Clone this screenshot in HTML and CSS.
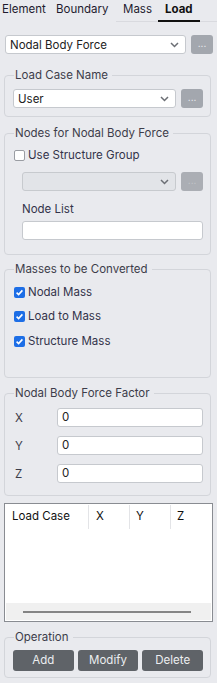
FILE: index.html
```html
<!DOCTYPE html>
<html>
<head>
<meta charset="utf-8">
<link rel="stylesheet" href="styles.css">
</head>
<body>
<div class="tabs">
  <div class="tab t-element">Element</div>
  <div class="tab t-boundary">Boundary</div>
  <div class="tabline">
    <div class="tab t-mass">Mass</div>
    <div class="tab t-load active">Load</div>
  </div>
</div>

<div class="toprow">
  <div class="select w-top"><span class="val">Nodal Body Force</span><svg class="chev" width="9" height="6" viewBox="0 0 9 6"><path d="M1 1 L4.5 4.5 L8 1" fill="none" stroke="#6b6e74" stroke-width="1.5"/></svg></div>
  <div class="dots">...</div>
</div>

<fieldset class="group g1">
  <legend>Load Case Name</legend>
  <div class="row">
    <div class="select w-in"><span class="val">User</span><svg class="chev" width="9" height="6" viewBox="0 0 9 6"><path d="M1 1 L4.5 4.5 L8 1" fill="none" stroke="#6b6e74" stroke-width="1.5"/></svg></div>
    <div class="dots">...</div>
  </div>
</fieldset>

<fieldset class="group g2">
  <legend>Nodes for Nodal Body Force</legend>
  <div class="check"><span class="box"></span>Use Structure Group</div>
  <div class="row indent">
    <div class="select disabled w-dis"><span class="val"></span><svg class="chev" width="9" height="6" viewBox="0 0 9 6"><path d="M1 1 L4.5 4.5 L8 1" fill="none" stroke="#6b6e74" stroke-width="1.5"/></svg></div>
    <div class="dots disabled">...</div>
  </div>
  <div class="label indent">Node List</div>
  <div class="input indent nodelist"></div>
</fieldset>

<fieldset class="group g3">
  <legend>Masses to be Converted</legend>
  <div class="check on"><span class="box"><svg width="11" height="11" viewBox="0 0 11 11"><path d="M2.6 5.6 L4.6 7.5 L8.4 3.4" fill="none" stroke="#fff" stroke-width="1.6"/></svg></span>Nodal Mass</div>
  <div class="check on"><span class="box"><svg width="11" height="11" viewBox="0 0 11 11"><path d="M2.6 5.6 L4.6 7.5 L8.4 3.4" fill="none" stroke="#fff" stroke-width="1.6"/></svg></span>Load to Mass</div>
  <div class="check on"><span class="box"><svg width="11" height="11" viewBox="0 0 11 11"><path d="M2.6 5.6 L4.6 7.5 L8.4 3.4" fill="none" stroke="#fff" stroke-width="1.6"/></svg></span>Structure Mass</div>
</fieldset>

<fieldset class="group g4">
  <legend>Nodal Body Force Factor</legend>
  <div class="frow"><span class="flabel">X</span><div class="input finput">0</div></div>
  <div class="frow"><span class="flabel">Y</span><div class="input finput">0</div></div>
  <div class="frow"><span class="flabel">Z</span><div class="input finput">0</div></div>
</fieldset>

<div class="table">
  <div class="thead">
    <div class="th c1">Load Case</div>
    <div class="th c2">X</div>
    <div class="th c3">Y</div>
    <div class="th c4">Z</div>
  </div>
  <div class="tbody"></div>
  <div class="hscroll"><div class="thumb"></div></div>
</div>

<fieldset class="group g5">
  <legend>Operation</legend>
  <div class="btns">
    <div class="btn">Add</div>
    <div class="btn">Modify</div>
    <div class="btn">Delete</div>
  </div>
</fieldset>
</body>
</html>
```

FILE: styles.css
```css
html, body {
  margin: 0;
  padding: 0;
}
body {
  width: 217px;
  height: 683px;
  background: #e9eaee;
  font-family: Inter, "Noto Sans", "Liberation Sans", sans-serif;
  font-size: 11.5px;
  color: #333;
  overflow: hidden;
}

.tabs {
  display: flex;
  height: 22px;
  color: #1e1b2e;
}
.tab {
  line-height: 18px;
  height: 20px;
}
.t-element { padding-left: 2px; width: 56px; box-sizing: border-box; }
.t-boundary { width: 60px; box-sizing: border-box; }
.tabline {
  flex: 1;
  display: flex;
  border-bottom: 1px solid #d9dadf;
  height: 21px;
  padding-left: 7px;
}
.t-mass { width: 35px; }
.t-load {
  font-weight: 700;
  color: #111;
  width: 42px;
  box-sizing: border-box;
  padding-left: 7px;
  border-bottom: 2px solid #111;
  height: 22px;
}

.toprow {
  display: flex;
  gap: 5px;
  margin: 13px 0 0 5px;
}

.select {
  box-sizing: border-box;
  height: 19px;
  background: #fff;
  border: 1px solid #c6c9ce;
  border-radius: 3px;
  display: flex;
  align-items: center;
  justify-content: space-between;
  padding: 0 6px 0 4px;
  color: #222;
}
.select .chev { flex: none; }
.select.disabled {
  background: #e2e4e8;
  border-color: #c7cace;
}
.w-top { width: 181px; }
.w-in { width: 165px; }
.w-dis { width: 156px; }

.dots {
  box-sizing: border-box;
  width: 22px;
  height: 19px;
  background: #a3a7ae;
  border-radius: 3px;
  color: #eef0f3;
  text-align: center;
  line-height: 16px;
  font-size: 10px;
}
.dots.disabled {
  background: #abaeb4;
  color: #c4c6ca;
}

.group {
  margin: 0 6px 0 4px;
  border: 1px solid #d3d5da;
  border-radius: 4px;
  padding: 0 7px 0 8px;
  min-width: 0;
}
.group legend {
  padding: 0 4px 0 1px;
  margin-left: 1px;
  line-height: 14px;
  color: #3d3d4a;
}
.row {
  display: flex;
  gap: 5px;
}
.indent { margin-left: 9px; }

.g1 { margin-top: 14px; padding-top: 7px; padding-bottom: 8px; }
.g2 { margin-top: 9px; padding-top: 7px; padding-bottom: 14px; }
.g3 { margin-top: 7px; padding-top: 8px; padding-bottom: 28px; }
.g4 { margin-top: 8px; padding-top: 8px; padding-bottom: 12px; }
.g5 { margin-top: 8px; padding-top: 6px; padding-bottom: 6px; }

.check {
  display: flex;
  align-items: center;
  height: 16px;
  color: #33334a;
  margin-left: 1px;
}
.g3 .check:nth-child(2) { margin-bottom: 8px; }
.g3 .check:nth-child(3) { margin-bottom: 9px; }
.g2 .check { margin-bottom: 9px; }
.box {
  box-sizing: border-box;
  width: 11px;
  height: 11px;
  border: 1px solid #9a9da3;
  border-radius: 2px;
  background: #fff;
  margin-right: 3px;
  display: flex;
}
.check.on .box {
  background: #1d6ee6;
  border-color: #1d6ee6;
  border-width: 0;
}

.label {
  margin-top: 11px;
  line-height: 14px;
  color: #33334a;
}
.input {
  box-sizing: border-box;
  height: 19px;
  background: #fff;
  border: 1px solid #c6c9ce;
  border-radius: 3px;
  padding: 0 4px;
  line-height: 17px;
  color: #222;
}
.nodelist {
  margin-top: 5px;
}

.frow {
  display: flex;
  align-items: center;
  margin-bottom: 9px;
}
.frow:last-child { margin-bottom: 0; }
.flabel {
  width: 42px;
  padding-left: 2px;
  color: #3d3d4a;
}
.finput { flex: 1; }

.table {
  margin: 7px 4px 0 4px;
  width: 209px;
  box-sizing: border-box;
  height: 119px;
  border: 1px solid #898c92;
  background: #fff;
  padding: 1px;
  display: flex;
  flex-direction: column;
}
.thead {
  display: flex;
  height: 24px;
  color: #111;
}
.th {
  box-sizing: border-box;
  line-height: 22px;
  padding-left: 6px;
  border-right: 1px solid #e3e4e7;
}
.c1 { width: 83px; }
.c2 { width: 41px; padding-left: 7px; }
.c3 { width: 41px; }
.c4 { flex: 1; border-right: none; }
.tbody { flex: 1; }
.hscroll {
  height: 17px;
  background: #f0f0f0;
  display: flex;
  align-items: center;
  padding-left: 17px;
}
.thumb {
  width: 168px;
  height: 2px;
  background: #848484;
}

.btns {
  display: flex;
  gap: 4px;
}
.btn {
  flex: 1;
  height: 21px;
  line-height: 21px;
  background: #5f6368;
  color: #eceef0;
  border-radius: 3px;
  text-align: center;
}
```
